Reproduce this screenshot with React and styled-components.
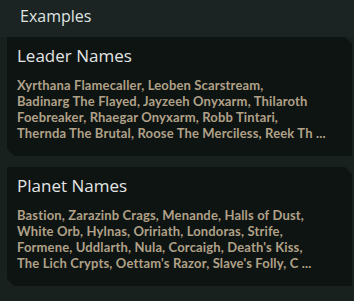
import React from "react";
import styled, { createGlobalStyle } from "styled-components";

const GlobalStyle = createGlobalStyle`
  html, body {
    margin: 0;
    padding: 0;
    background: #19211f;
  }
`;

const Page = styled.div`
  width: 354px;
  height: 301px;
  overflow: hidden;
  background: #19211f;
`;

const Header = styled.div`
  height: 37px;
  padding-left: 20px;
  box-sizing: border-box;
  font-family: "Open Sans", "Noto Sans", sans-serif;
  font-size: 16px;
  line-height: 32px;
  color: #dfe3e1;
  background: #1b2422;
`;

const List = styled.div`
  display: flex;
  flex-direction: column;
  gap: 11px;
  padding: 0 2px 0 7px;
`;

const Card = styled.div`
  background: #0e1412;
  padding: 6px 10px 15px 10px;
  height: 119px;
  box-sizing: border-box;
  clip-path: polygon(0 0, calc(100% - 7px) 0, 100% 7px, 100% 100%, 7px 100%, 0 calc(100% - 7px));
`;

const CardTitle = styled.div`
  font-family: "Open Sans", "Noto Sans", sans-serif;
  font-size: 17px;
  line-height: 26px;
  color: #e4e6e5;
  margin-bottom: 8px;
`;

const Names = styled.div`
  font-family: "Lato", "DejaVu Sans", sans-serif;
  font-weight: bold;
  font-size: 13px;
  letter-spacing: 0.15px;
  line-height: 16px;
  color: #b0a188;
  white-space: nowrap;
`;

const Line = styled.div``;

const examples = [
  {
    title: "Leader Names",
    lines: [
      "Xyrthana Flamecaller, Leoben Scarstream,",
      "Badinarg The Flayed, Jayzeeh Onyxarm, Thilaroth",
      "Foebreaker, Rhaegar Onyxarm, Robb Tintari,",
      "Thernda The Brutal, Roose The Merciless, Reek Th ...",
    ],
  },
  {
    title: "Planet Names",
    lines: [
      "Bastion, Zarazinb Crags, Menande, Halls of Dust,",
      "White Orb, Hylnas, Oririath, Londoras, Strife,",
      "Formene, Uddlarth, Nula, Corcaigh, Death's Kiss,",
      "The Lich Crypts, Oettam's Razor, Slave's Folly, C ...",
    ],
  },
];

export default function App() {
  return (
    <Page>
      <GlobalStyle />
      <Header>Examples</Header>
      <List>
        {examples.map((ex) => (
          <Card key={ex.title}>
            <CardTitle>{ex.title}</CardTitle>
            <Names>
              {ex.lines.map((l) => (
                <Line key={l}>{l}</Line>
              ))}
            </Names>
          </Card>
        ))}
      </List>
    </Page>
  );
}
